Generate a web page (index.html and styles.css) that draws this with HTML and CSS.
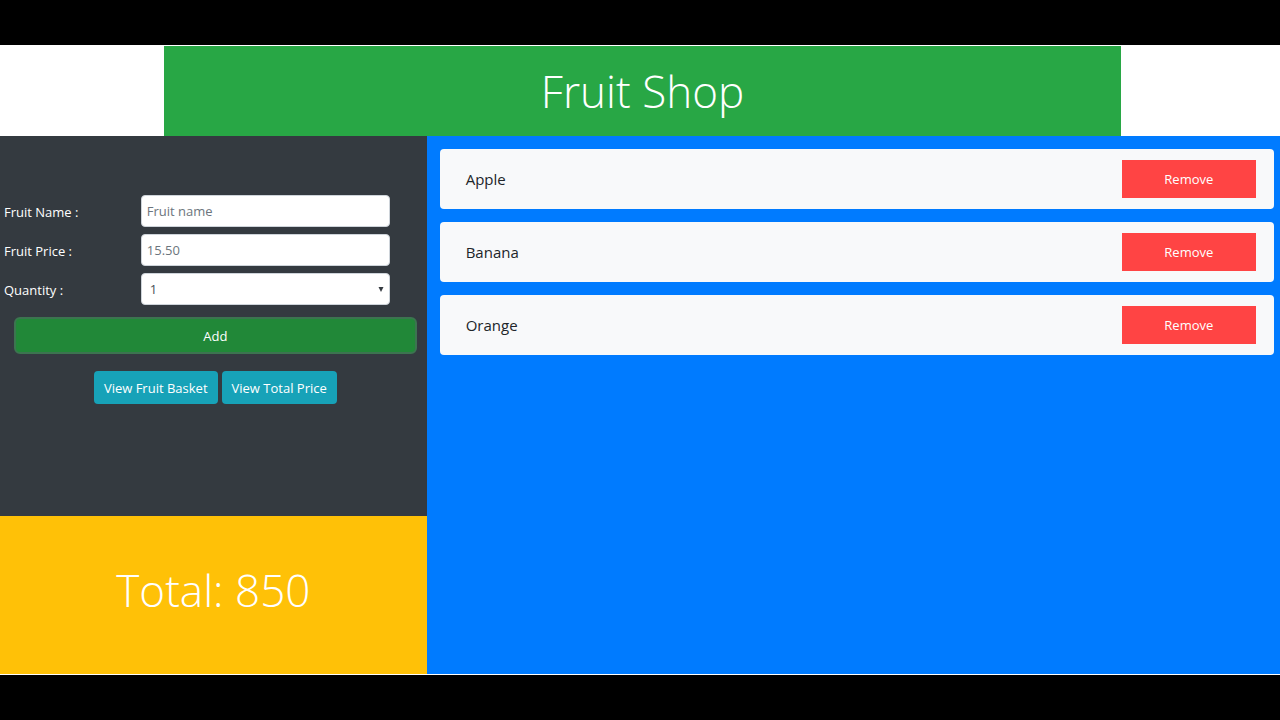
FILE: index.html
```html
<!DOCTYPE html>
<html lang="en">
<head>
<meta charset="utf-8">
<meta name="viewport" content="width=device-width, initial-scale=1">
<title>Fruit Shop</title>
<link rel="stylesheet" href="styles.css">
</head>
<body>
<div class="shop">
  <header class="shop-header"><h1 class="display">Fruit Shop</h1></header>
  <main class="shop-body">
    <div class="sidebar">
      <form class="fruit-form">
        <div class="field">
          <label for="fruit-name">Fruit Name :</label>
          <input class="control" id="fruit-name" type="text" placeholder="Fruit name">
        </div>
        <div class="field">
          <label for="fruit-price">Fruit Price :</label>
          <input class="control" id="fruit-price" type="text" placeholder="15.50">
        </div>
        <div class="field">
          <label for="quantity">Quantity :</label>
          <div class="select-wrap">
            <select class="control select" id="quantity"><option>1</option><option>2</option><option>3</option></select>
            <svg class="caret" viewBox="0 0 6 6" aria-hidden="true"><path d="M0.5 1h5L3 6z"/></svg>
          </div>
        </div>
        <button class="btn btn-add" type="button">Add</button>
        <div class="actions">
          <button class="btn btn-info" type="button">View Fruit Basket</button>
          <button class="btn btn-info" type="button">View Total Price</button>
        </div>
      </form>
      <section class="total"><h2 class="display">Total: 850</h2></section>
    </div>
    <ul class="basket">
      <li class="item"><span>Apple</span><button class="btn-remove" type="button">Remove</button></li>
      <li class="item"><span>Banana</span><button class="btn-remove" type="button">Remove</button></li>
      <li class="item"><span>Orange</span><button class="btn-remove" type="button">Remove</button></li>
    </ul>
  </main>
</div>
</body>
</html>
```
FILE: styles.css
```css
* {
  box-sizing: border-box;
}

body {
  margin: 0;
  background: #000;
  font: 13px/20px "Segoe UI", "Open Sans", "Noto Sans", sans-serif;
}

button,
input,
select {
  font: inherit;
}

.shop {
  display: flex;
  flex-direction: column;
  min-height: 100vh;
  border: solid #000;
  border-width: 45px 0;
  padding: 1px 0;
  background: #fff;
}

.shop-header {
  margin: 0 159px 0 164px;
  padding: 16px 0;
  background: #28a745;
  color: #fff;
  text-align: center;
}

.display {
  margin: 0;
  font-size: 44px;
  font-weight: 300;
  line-height: 58px;
}

.shop-body {
  flex: 1;
  display: grid;
  grid-template-columns: 1fr 2fr;
}

.sidebar {
  display: grid;
  grid-template-rows: 12fr 5fr;
}

.fruit-form {
  display: flex;
  flex-direction: column;
  gap: 7px;
  padding-top: 59px;
  background: #343a40;
  color: #fff;
}

.field {
  display: grid;
  grid-template-columns: 33% 1fr 37px;
  align-items: center;
}

.field label {
  padding: 2px 0 0 4px;
}

.control {
  display: block;
  width: 100%;
  height: 32px;
  padding: 0 5px;
  border: 1px solid #ced4da;
  border-radius: 4px;
  background: #fff;
  color: #495057;
}

.control::placeholder {
  color: #6c757d;
  opacity: 1;
}

.select-wrap {
  position: relative;
}

.select {
  appearance: none;
  padding: 0 8px;
}

.caret {
  position: absolute;
  right: 6px;
  top: 13px;
  width: 6px;
  height: 6px;
  fill: #343a40;
}

.btn {
  border: 0;
  border-radius: 4px;
  color: #fff;
}

.btn-add {
  height: 37px;
  margin: 5px 10px 0 14px;
  border: 2px solid #3c7450;
  border-radius: 6px;
  background: #218838;
}

.actions {
  display: flex;
  justify-content: center;
  gap: 4px;
  padding: 10px 0 0 4px;
}

.btn-info {
  height: 33px;
  padding: 0 10px;
  background: #17a2b8;
}

.total {
  display: flex;
  align-items: center;
  justify-content: center;
  padding-bottom: 10px;
  background: #ffc107;
  color: #fff;
}

.basket {
  display: flex;
  flex-direction: column;
  gap: 13px;
  margin: 0;
  padding: 13px 6px 13px 13px;
  background: #007bff;
  list-style: none;
}

.item {
  display: flex;
  align-items: center;
  justify-content: space-between;
  height: 60px;
  padding: 0 18px 0 26px;
  border-radius: 4px;
  background: #f8f9fa;
  color: #212529;
  font-size: 15px;
}

.btn-remove {
  width: 17%;
  height: 38px;
  padding: 0;
  border: 0;
  background: #ff4444;
  color: #fff;
  font-size: 13px;
}
```
